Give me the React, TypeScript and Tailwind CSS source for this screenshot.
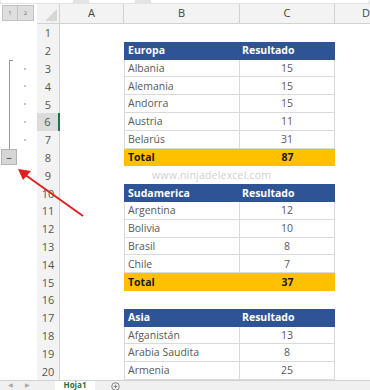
import React from "react";

type Row =
  | { kind: "empty" }
  | { kind: "head"; name: string }
  | { kind: "data"; name: string; value: number }
  | { kind: "total"; value: number }
  | { kind: "mark" };

const rows: Row[] = [
  { kind: "empty" },
  { kind: "head", name: "Europa" },
  { kind: "data", name: "Albania", value: 15 },
  { kind: "data", name: "Alemania", value: 15 },
  { kind: "data", name: "Andorra", value: 15 },
  { kind: "data", name: "Austria", value: 11 },
  { kind: "data", name: "Belarús", value: 31 },
  { kind: "total", value: 87 },
  { kind: "mark" },
  { kind: "head", name: "Sudamerica" },
  { kind: "data", name: "Argentina", value: 12 },
  { kind: "data", name: "Bolivia", value: 10 },
  { kind: "data", name: "Brasil", value: 8 },
  { kind: "data", name: "Chile", value: 7 },
  { kind: "total", value: 37 },
  { kind: "empty" },
  { kind: "head", name: "Asia" },
  { kind: "data", name: "Afganistán", value: 13 },
  { kind: "data", name: "Arabia Saudita", value: 8 },
  { kind: "data", name: "Armenia", value: 25 },
];

function Outline({ n }: { n: number }) {
  // group bracket for rows 3-7, collapse button on row 8
  if (n >= 3 && n <= 7) {
    return (
      <div className="w-[37px] h-full flex">
        <div className={`ml-[9px] w-[4px] h-full border-l border-[#9a9a9a] ${n === 3 ? "border-t" : ""}`} />
        <div className="ml-[11px] mt-[8px] w-[2px] h-[2px] bg-[#c4c4c4]" />
      </div>
    );
  }
  if (n === 8) {
    return (
      <div className="w-[37px] h-full flex items-start">
        <div className="ml-[1px] w-[16px] h-[16px] bg-[#d6d6d6] border border-[#b4b4b4] flex items-center justify-center text-[11px] leading-none text-[#444]">
          –
        </div>
      </div>
    );
  }
  return <div className="w-[37px] h-full" />;
}

function Cells({ row }: { row: Row }) {
  if (row.kind === "head") {
    return (
      <div className="flex h-full bg-[#2f5496] text-white font-bold">
        <div className="w-[116px] pl-[4px] flex items-center">{row.name}</div>
        <div className="w-[95px] pl-[2px] flex items-center">Resultado</div>
      </div>
    );
  }
  if (row.kind === "data") {
    return (
      <div className="flex h-full text-[#595959] border-b border-[#dadada]">
        <div className="w-[116px] pl-[3px] flex items-center border-l border-r border-[#dadada]">{row.name}</div>
        <div className="w-[95px] flex items-center justify-center border-r border-[#dadada]">{row.value}</div>
      </div>
    );
  }
  if (row.kind === "total") {
    return (
      <div className="flex h-full bg-[#ffc000] text-[#1a1a1a] font-bold">
        <div className="w-[116px] pl-[4px] flex items-center">Total</div>
        <div className="w-[95px] flex items-center justify-center">{row.value}</div>
      </div>
    );
  }
  if (row.kind === "mark") {
    return (
      <div className="h-full pl-[28px] flex items-center text-[#cfcfcf] whitespace-nowrap tracking-[0.2px]">
        www.ninjadelexcel.com
      </div>
    );
  }
  return null;
}

export default function App() {
  return (
    <div className="relative w-[370px] h-[390px] overflow-hidden bg-white text-[10.5px]" style={{ fontFamily: '"Open Sans", "Noto Sans", sans-serif' }}>
      {/* toolbar remnant */}
      <div className="h-[4px] bg-[#e4e4e4] flex gap-[16px] px-[1px]">
        <div className="w-[72px] h-[3px] bg-white rounded-b-[2px]" />
        <div className="w-[46px] h-[3px] bg-white rounded-b-[2px]" />
        <div className="flex-1 h-[3px] bg-white rounded-b-[2px]" />
      </div>

      {/* column headers */}
      <div className="flex h-[20px] text-[#444] text-[11px]">
        <div className="w-[37px] flex items-start pt-[1px] pl-[2px] bg-white">
          <div className="w-[16px] h-[16px] bg-[#dedede] border border-[#c2c2c2] flex items-center justify-center text-[6px] text-[#777]">1</div>
          <div className="w-[16px] h-[16px] bg-[#dedede] border border-[#c2c2c2] border-l-0 flex items-center justify-center text-[6px] text-[#777]">2</div>
        </div>
        <div className="w-[23px] bg-[#f3f3f3] border-b border-r border-[#d2d2d2] flex items-end justify-end p-[2px]">
          <div className="w-0 h-0 border-l-[12px] border-l-transparent border-b-[12px] border-b-[#d7d7d7]" />
        </div>
        <div className="w-[64px] bg-[#f3f3f3] border-b border-r border-[#d2d2d2] flex items-center justify-center">A</div>
        <div className="w-[116px] bg-[#f3f3f3] border-b border-r border-[#d2d2d2] flex items-center justify-center">B</div>
        <div className="w-[95px] bg-[#f3f3f3] border-b border-r border-[#d2d2d2] flex items-center justify-center">C</div>
        <div className="flex-1 bg-[#f3f3f3] border-b border-[#d2d2d2] flex items-center justify-end">D</div>
      </div>

      {/* grid rows */}
      {rows.map((row, i) => {
        const n = i + 1;
        const active = n === 6;
        return (
          <div key={n} className="flex h-[17.8px] leading-none">
            <Outline n={n} />
            <div
              className={`w-[23px] flex items-center justify-center text-[11px] border-r ${
                active ? "bg-[#dcdcdc] text-[#3a5f48] border-r-[2px] border-[#217346]" : "bg-[#f3f3f3] text-[#555] border-[#d2d2d2]"
              }`}
            >
              {n}
            </div>
            <div className="w-[64px]" />
            <div className="w-[211px] h-full">
              <Cells row={row} />
            </div>
            <div className="flex-1" />
          </div>
        );
      })}

      {/* sheet tabs */}
      <div className="flex h-[10px] bg-[#f0f0f0] border-t border-[#d2d2d2] text-[8px] leading-[8px]">
        <div className="w-[55px] flex items-center gap-[12px] pl-[8px] text-[#a8a8a8] text-[6px] leading-[6px]">
          <span>◀</span>
          <span>▶</span>
        </div>
        <div className="w-[40px] bg-white flex justify-center font-bold text-[#217346]">Hoja1</div>
        <div className="w-[40px] flex justify-center items-start pt-[1px]">
          <svg width="9" height="9" viewBox="0 0 10 10">
            <circle cx="5" cy="5" r="4.2" fill="none" stroke="#777" strokeWidth="1" />
            <path d="M5 3v4M3 5h4" stroke="#777" strokeWidth="1" />
          </svg>
        </div>
      </div>

      {/* red annotation arrow */}
      <svg className="absolute left-0 top-0 pointer-events-none" width="370" height="390">
        <line x1="83" y1="216" x2="24" y2="174" stroke="#e02020" strokeWidth="2" />
        <polygon points="18,169 31,171 23,180" fill="#e02020" />
      </svg>
    </div>
  );
}
